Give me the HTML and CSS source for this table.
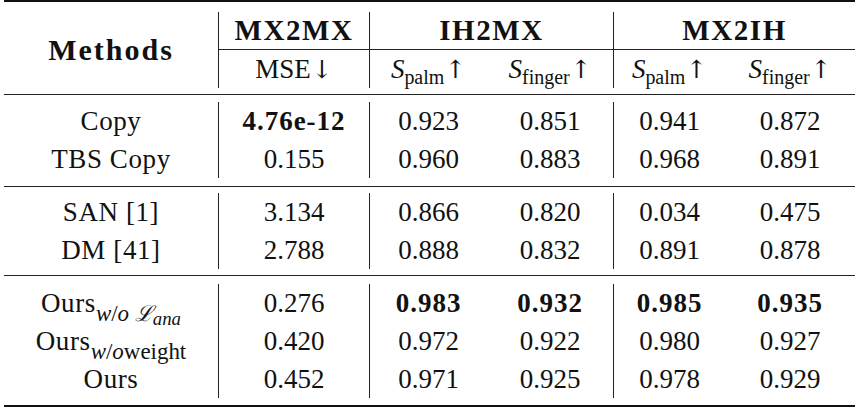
FILE: index.html
```html
<!DOCTYPE html>
<html>
<head>
<meta charset="utf-8">
<link rel="stylesheet" href="styles.css">
</head>
<body>
<div class="tbl">
  <div class="rule thick"></div>
  <div class="sec head">
    <div class="c methods b"><span>Methods</span></div>
    <div class="c vl cm b">MX2MX</div>
    <div class="c vl cm b span2">IH2MX</div>
    <div class="c vl cm b span2">MX2IH</div>
    <div class="c vl">MSE<span class="arr">↓</span></div>
    <div class="c vl"><i>S</i><sub>palm</sub><span class="arr">↑</span></div>
    <div class="c"><i>S</i><sub>finger</sub><span class="arr">↑</span></div>
    <div class="c vl"><i>S</i><sub>palm</sub><span class="arr">↑</span></div>
    <div class="c"><i>S</i><sub>finger</sub><span class="arr">↑</span></div>
  </div>
  <div class="rule"></div>
  <div class="sec body s1">
    <div class="c lbl">Copy</div><div class="c vl b">4.76e-12</div><div class="c vl">0.923</div><div class="c">0.851</div><div class="c vl">0.941</div><div class="c">0.872</div>
    <div class="c lbl">TBS Copy</div><div class="c vl">0.155</div><div class="c vl">0.960</div><div class="c">0.883</div><div class="c vl">0.968</div><div class="c">0.891</div>
  </div>
  <div class="rule"></div>
  <div class="sec body s2">
    <div class="c lbl">SAN [1]</div><div class="c vl">3.134</div><div class="c vl">0.866</div><div class="c">0.820</div><div class="c vl">0.034</div><div class="c">0.475</div>
    <div class="c lbl">DM [41]</div><div class="c vl">2.788</div><div class="c vl">0.888</div><div class="c">0.832</div><div class="c vl">0.891</div><div class="c">0.878</div>
  </div>
  <div class="rule"></div>
  <div class="sec body s3">
    <div class="c lbl">Ours<sub class="big"><i>w</i>/<i>o</i> <span class="scr">ℒ</span><sub class="ana"><i>ana</i></sub></sub></div><div class="c vl">0.276</div><div class="c vl b">0.983</div><div class="c b">0.932</div><div class="c vl b">0.985</div><div class="c b">0.935</div>
    <div class="c lbl">Ours<sub class="big"><i>w</i>/<i>o</i>weight</sub></div><div class="c vl">0.420</div><div class="c vl">0.972</div><div class="c">0.922</div><div class="c vl">0.980</div><div class="c">0.927</div>
    <div class="c lbl">Ours</div><div class="c vl">0.452</div><div class="c vl">0.971</div><div class="c">0.925</div><div class="c vl">0.978</div><div class="c">0.929</div>
  </div>
  <div class="rule thick"></div>
</div>
</body>
</html>
```

FILE: styles.css
```css
html, body {
  margin: 0;
  padding: 0;
  background: #fff;
}
body {
  font-family: "Liberation Serif", Tinos, "DejaVu Serif", serif;
  font-size: 27px;
  color: #111;
}
.tbl {
  width: 851px;
  margin-left: 4px;
}
.rule {
  height: 1px;
  background: #222;
}
.rule.thick {
  height: 2px;
  background: #111;
}
.sec {
  display: grid;
  grid-template-columns: 214px 151px 118px 126px 112px 130px;
}
.head {
  padding-top: 10px;
  padding-bottom: 6px;
  grid-template-rows: 38px 38px;
}
.body {
  grid-auto-rows: 38px;
}
.s1 { padding: 7px 0 8px; }
.s2 { padding: 6px 0 6px; }
.s3 { padding: 8px 0 7px; }
.c {
  text-align: center;
  white-space: nowrap;
  line-height: 38px;
}
.lbl {
  letter-spacing: 0.6px;
}
.head .cm {
  line-height: 36px;
}
.vl {
  border-left: 1px solid #222;
}
.cm {
  border-bottom: 1px solid #222;
}
.span2 {
  grid-column: span 2;
}
.methods {
  grid-row: 1 / 3;
  display: flex;
  align-items: center;
  justify-content: center;
}
.b {
  font-weight: bold;
  letter-spacing: 1px;
}
.head .b {
  font-size: 29px;
  letter-spacing: 1.6px;
}
.head .methods {
  font-size: 30px;
  letter-spacing: 2px;
}
.arr {
  font-family: "DejaVu Serif", serif;
  font-size: 0.92em;
  margin-left: 1px;
}
sub {
  font-size: 0.74em;
  vertical-align: -0.3em;
  line-height: 0;
  letter-spacing: 0;
}
sub.big {
  font-size: 0.85em;
  vertical-align: -0.38em;
}
.scr {
  font-family: "DejaVu Serif", serif;
  font-style: italic;
  font-size: 0.95em;
}
sub.ana {
  font-size: 0.82em;
  vertical-align: -0.2em;
}
```
